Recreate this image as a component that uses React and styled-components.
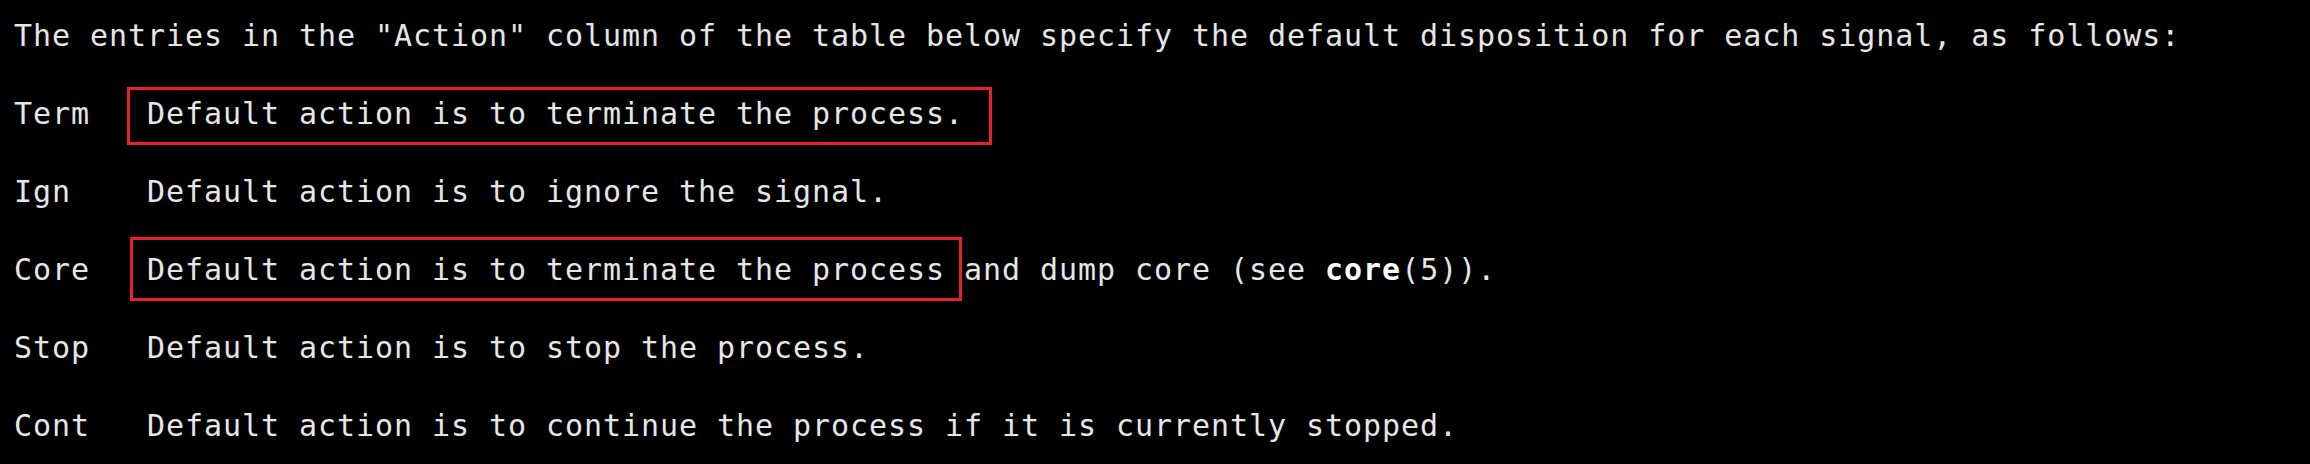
import React from 'react'
import styled, { createGlobalStyle } from 'styled-components'

const GlobalStyle = createGlobalStyle`
  html, body {
    margin: 0;
    padding: 0;
    background: #000;
  }
`

const Screen = styled.div`
  width: 2310px;
  height: 464px;
  box-sizing: border-box;
  padding: 16px 14px 0;
  background: #000;
  color: #e6e6e6;
  font-family: "DejaVu Sans Mono", "Liberation Mono", monospace;
  font-size: 30px;
  letter-spacing: 0.94px;
  line-height: 39px;
  white-space: pre;
  display: flex;
  flex-direction: column;
  gap: 39px;
  overflow: hidden;
`

const Line = styled.div`
  height: 39px;
`

const Row = styled.div`
  display: flex;
  height: 39px;
`

const Name = styled.span`
  width: 133px;
  flex: none;
`

const Action = styled.span``

const Highlight = styled.span`
  position: relative;
  display: inline-block;
  line-height: 39px;

  &::after {
    content: '';
    position: absolute;
    top: ${p => -p.$top}px;
    bottom: ${p => -p.$bottom}px;
    left: ${p => -p.$left}px;
    right: ${p => -p.$right}px;
    border: 3px solid #e8202a;
    pointer-events: none;
  }
`

const Bold = styled.b`
  font-weight: bold;
  color: #fff;
`

const App = () => {
  return (
    <>
      <GlobalStyle />
      <Screen>
        <Line>The entries in the "Action" column of the table below specify the default disposition for each signal, as follows:</Line>
        <Row>
          <Name>Term</Name>
          <Action>
            <Highlight $top={7} $bottom={12} $left={20} $right={28}>Default action is to terminate the process.</Highlight>
          </Action>
        </Row>
        <Row>
          <Name>Ign</Name>
          <Action>Default action is to ignore the signal.</Action>
        </Row>
        <Row>
          <Name>Core</Name>
          <Action>
            <Highlight $top={13} $bottom={12} $left={17} $right={17}>Default action is to terminate the process</Highlight>
            {' and dump core (see '}<Bold>core</Bold>(5)).
          </Action>
        </Row>
        <Row>
          <Name>Stop</Name>
          <Action>Default action is to stop the process.</Action>
        </Row>
        <Row>
          <Name>Cont</Name>
          <Action>Default action is to continue the process if it is currently stopped.</Action>
        </Row>
      </Screen>
    </>
  )
}

export default App
